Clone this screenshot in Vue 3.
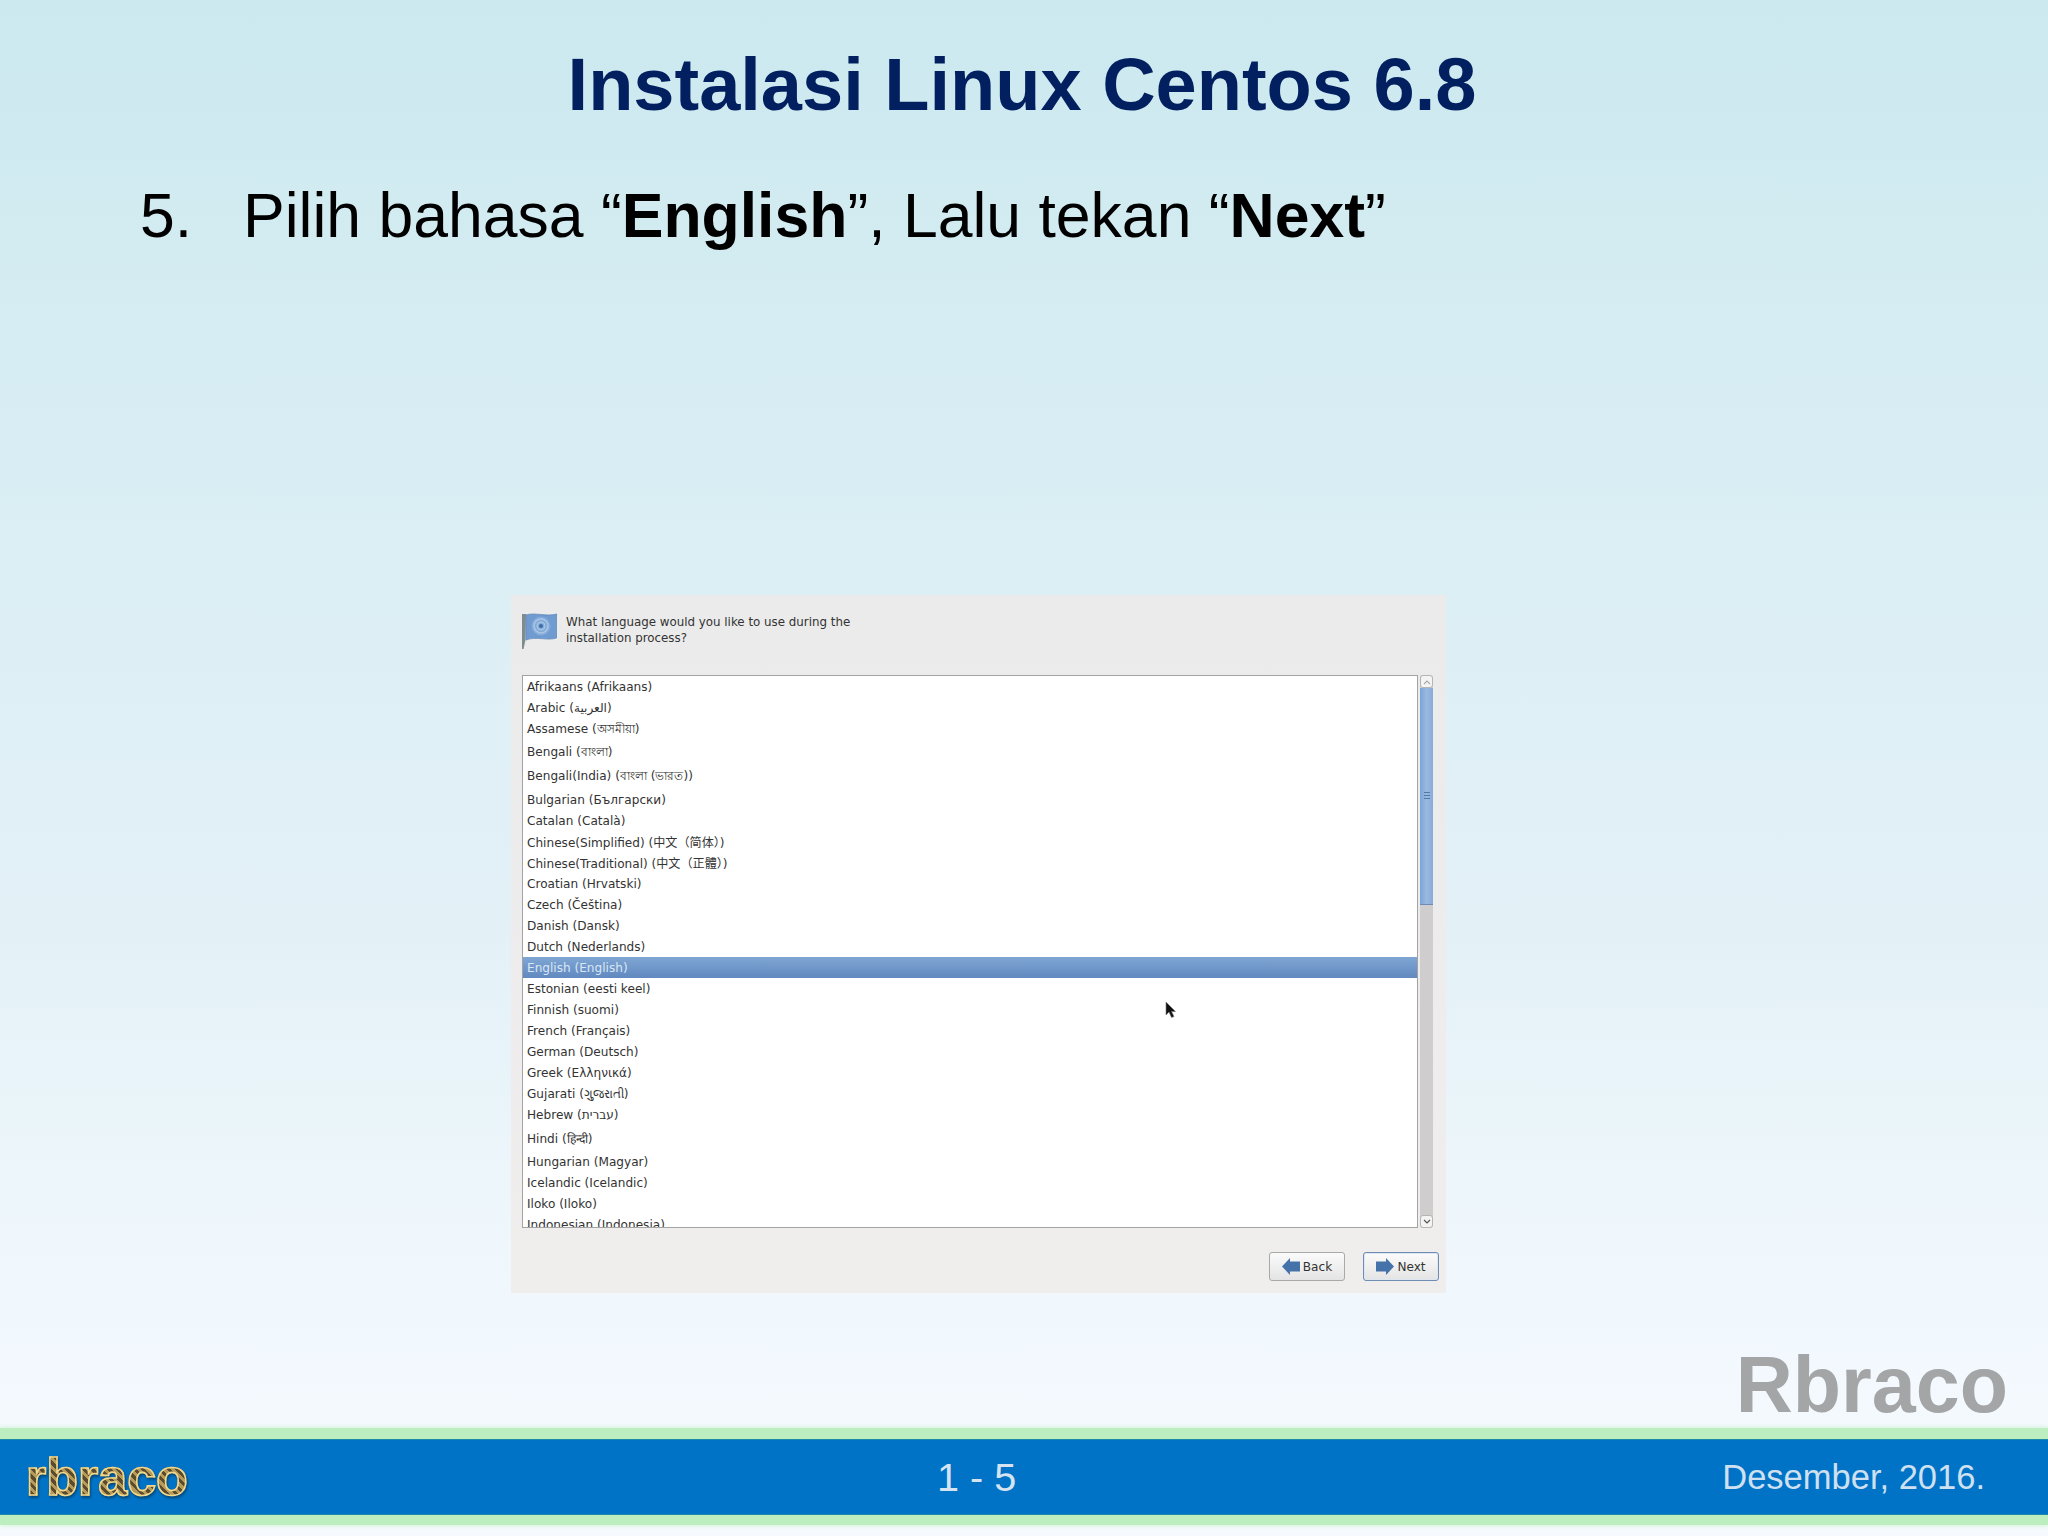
<template>
  <div class="slide">
    <h1 class="title">Instalasi Linux Centos 6.8</h1>
    <div class="step">
      <span class="num">5.</span>
      <span>Pilih bahasa “<b>English</b>”, Lalu tekan “<b>Next</b>”</span>
    </div>

    <div class="installer">
      <div class="head">
        <svg class="flag" width="35" height="36" viewBox="0 0 35 36">
          <path d="M0 1 L4 1 L3.5 27 L1.5 36 L0 36 Z" fill="#7f8c8e" />
          <path d="M4 2 C13 -1 24 4 35 1 L34.5 25 C25 28 14 23 4 27 Z" fill="#6f9bd0" stroke="#6489ba" stroke-width="0.8" />
          <circle cx="19" cy="13" r="9.5" fill="#83abd9" />
          <circle cx="19" cy="13" r="7" fill="none" stroke="#a9c6e6" stroke-width="1.6" />
          <circle cx="19" cy="13" r="4" fill="#86aedb" stroke="#b9d0ea" stroke-width="0.8" />
          <circle cx="19" cy="13" r="2" fill="#3d6ba4" />
        </svg>
        <p class="question">What language would you like to use during the<br />installation process?</p>
      </div>

      <div class="picker">
        <div class="list">
          <div
            v-for="lang in languages"
            :key="lang.name"
            class="row"
            :class="{ active: lang.name.startsWith('English') }"
            :style="{ height: lang.h + 'px' }"
          >{{ lang.name }}</div>
        </div>
        <div class="scroll">
          <div class="arrow">
            <svg width="8" height="6" viewBox="0 0 8 6"><path d="M1 5 L4 2 L7 5" fill="none" stroke="#aaa" stroke-width="1.1" /></svg>
          </div>
          <div class="thumb"><span class="grip"></span></div>
          <div class="track"></div>
          <div class="arrow">
            <svg width="8" height="6" viewBox="0 0 8 6"><path d="M1 1 L4 4 L7 1" fill="none" stroke="#555" stroke-width="1.2" /></svg>
          </div>
        </div>
        <svg class="cursor" width="12" height="18" viewBox="0 0 12 18">
          <path d="M1 1 L1 14 L4 11 L6.5 16.5 L9 15.5 L6.5 10.5 L10.5 10.5 Z" fill="#111" stroke="#777" stroke-width="0.6" />
        </svg>
      </div>

      <div class="buttons">
        <div class="btn">
          <svg width="18" height="17" viewBox="0 0 18 17"><path d="M0 8.5 L8 0 L8 3.5 L18 3.5 L18 13.5 L8 13.5 L8 17 Z" fill="#4672aa" /></svg>
          Back
        </div>
        <div class="btn default">
          <svg width="18" height="17" viewBox="0 0 18 17"><path d="M18 8.5 L10 0 L10 3.5 L0 3.5 L0 13.5 L10 13.5 L10 17 Z" fill="#4672aa" /></svg>
          Next
        </div>
      </div>
    </div>

    <div class="brand">Rbraco</div>

    <div class="footer">
      <div class="logo">rbraco</div>
      <div class="page">1 - 5</div>
      <div class="date">Desember, 2016.</div>
    </div>
  </div>
</template>

<script setup>
const languages = [
  { name: 'Afrikaans (Afrikaans)', h: 21 },
  { name: 'Arabic (العربية)', h: 21 },
  { name: 'Assamese (অসমীয়া)', h: 23 },
  { name: 'Bengali (বাংলা)', h: 24 },
  { name: 'Bengali(India) (বাংলা (ভারত))', h: 24 },
  { name: 'Bulgarian (Български)', h: 21 },
  { name: 'Catalan (Català)', h: 21 },
  { name: 'Chinese(Simplified) (中文（简体）)', h: 21 },
  { name: 'Chinese(Traditional) (中文（正體）)', h: 21 },
  { name: 'Croatian (Hrvatski)', h: 21 },
  { name: 'Czech (Čeština)', h: 21 },
  { name: 'Danish (Dansk)', h: 21 },
  { name: 'Dutch (Nederlands)', h: 21 },
  { name: 'English (English)', h: 21 },
  { name: 'Estonian (eesti keel)', h: 21 },
  { name: 'Finnish (suomi)', h: 21 },
  { name: 'French (Français)', h: 21 },
  { name: 'German (Deutsch)', h: 21 },
  { name: 'Greek (Ελληνικά)', h: 21 },
  { name: 'Gujarati (ગુજરાતી)', h: 21 },
  { name: 'Hebrew (עברית)', h: 22 },
  { name: 'Hindi (हिन्दी)', h: 25 },
  { name: 'Hungarian (Magyar)', h: 21 },
  { name: 'Icelandic (Icelandic)', h: 21 },
  { name: 'Iloko (Iloko)', h: 21 },
  { name: 'Indonesian (Indonesia)', h: 21 },
]
</script>

<style scoped>
.slide {
  position: relative;
  width: 2048px;
  height: 1536px;
  overflow: hidden;
  background: linear-gradient(180deg, #cbe9ef 0%, #d9eef4 30%, #e3f1f7 60%, #f1f8fd 85%, #f6fafe 100%);
  font-family: "Liberation Sans", Arial, sans-serif;
  color: #000;
}

.title {
  margin: 0;
  padding: 43px 4px 0 0;
  text-align: center;
  font-size: 74px;
  line-height: 83px;
  font-weight: 700;
  color: #02205f;
}

.step {
  display: flex;
  margin-top: 52px;
  padding-left: 140px;
  font-size: 62.5px;
  line-height: 74px;
  color: #000;
}

.num {
  width: 103px;
}

.installer {
  position: absolute;
  left: 511px;
  top: 595px;
  width: 935px;
  height: 698px;
  display: flex;
  flex-direction: column;
  background: linear-gradient(180deg, #ebebeb, #f0eded);
  font-family: "DejaVu Sans", "Noto Sans CJK SC", sans-serif;
  color: #333;
}

.head {
  display: flex;
  align-items: center;
  gap: 9px;
  height: 71px;
  padding-left: 11px;
  box-sizing: border-box;
}

.flag {
  flex: none;
}

.question {
  margin: 0;
  font-size: 11.85px;
  line-height: 15.5px;
}

.picker {
  position: relative;
  display: flex;
  height: 553px;
  margin: 9px 13px 0 11px;
  gap: 2px;
}

.list {
  flex: 1;
  overflow: hidden;
  background: #fff;
  border: 1px solid #a3a3a3;
}

.row {
  display: flex;
  align-items: center;
  padding-left: 4px;
  font-size: 12.1px;
  white-space: nowrap;
}

.row.active {
  background: linear-gradient(180deg, #7fa6d3, #6189c0);
  color: #d9e6f4;
}

.scroll {
  width: 13px;
  display: flex;
  flex-direction: column;
  background: #cfcdcd;
  border-radius: 3px;
  box-sizing: border-box;
}

.arrow {
  height: 13px;
  flex: none;
  display: flex;
  align-items: center;
  justify-content: center;
  box-sizing: border-box;
  border: 1px solid #b5b5b5;
  border-radius: 3px;
  background: #f4f4f4;
}

.thumb {
  height: 217px;
  display: flex;
  align-items: center;
  justify-content: center;
  box-sizing: border-box;
  border-bottom: 1px solid #6c8cb5;
  background: linear-gradient(90deg, #7ba4d6, #9ab9e0 50%, #87acdb);
}

.grip {
  width: 6px;
  height: 8px;
  background: repeating-linear-gradient(180deg, #4f79a8 0 1px, transparent 1px 3px);
}

.track {
  flex: 1;
}

.cursor {
  position: absolute;
  left: 643px;
  top: 326px;
}

.buttons {
  display: flex;
  justify-content: flex-end;
  gap: 18px;
  padding: 24px 7px 0 0;
}

.btn {
  display: flex;
  align-items: center;
  justify-content: center;
  gap: 3px;
  width: 76px;
  height: 29px;
  box-sizing: border-box;
  border: 1px solid #a9a9a9;
  border-radius: 3px;
  background: linear-gradient(180deg, #fbfbfb, #e4e4e4);
  font-size: 12.1px;
}

.btn.default {
  border-color: #6f8cb2;
  box-shadow: inset 0 0 0 1px #dde6f1;
}

.brand {
  position: absolute;
  right: 40px;
  top: 1339px;
  font-size: 79px;
  line-height: 92px;
  font-weight: 700;
  color: #a3a5a6;
}

.footer {
  position: absolute;
  left: 0;
  right: 0;
  top: 1428px;
  height: 97px;
  display: flex;
  align-items: center;
  justify-content: space-between;
  box-sizing: border-box;
  border-top: 11px solid #bdeebf;
  border-bottom: 10px solid #bdeebf;
  background: #0073c6;
  background-clip: padding-box;
  box-shadow: 0 0 5px #c6eec8, inset 0 1px 0 #1e8aa8, inset 0 -1px 0 #1e8aa8;
}

.logo {
  margin-left: 26px;
  font-size: 52px;
  line-height: 60px;
  font-weight: 700;
  background: repeating-linear-gradient(45deg, #5a4a30 0 3px, #b59a58 3px 6px);
  -webkit-background-clip: text;
  background-clip: text;
  -webkit-text-fill-color: transparent;
  -webkit-text-stroke: 1.6px #f0d88e;
  filter: drop-shadow(1px 2px 1px rgba(0, 0, 0, 0.35));
}

.page {
  position: absolute;
  left: 937px;
  font-size: 39.6px;
  color: #d6e4f2;
}

.date {
  padding-right: 63px;
  font-size: 34.5px;
  color: #cfe0f0;
}
</style>

<style>
html,
body {
  margin: 0;
}
</style>
